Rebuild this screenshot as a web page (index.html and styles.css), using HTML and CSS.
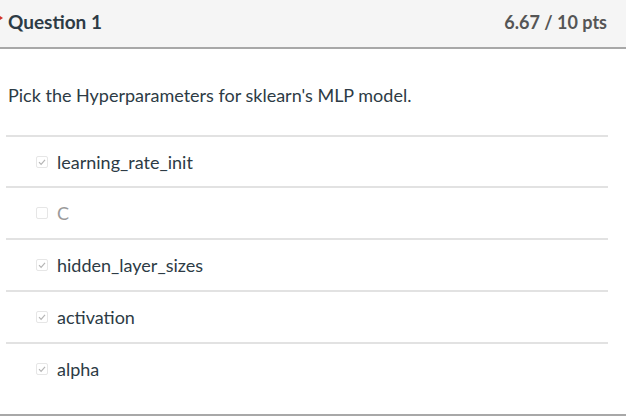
FILE: index.html
```html
<!DOCTYPE html>
<html>
<head>
<meta charset="utf-8">
<link rel="stylesheet" href="styles.css">
</head>
<body>
<div class="question">
  <div class="header">
    <span class="flag"></span>
    <h2 class="title">Question 1</h2>
    <span class="score">6.67 / 10 pts</span>
  </div>
  <div class="body">
    <p class="prompt">Pick the Hyperparameters for sklearn's MLP model.</p>
    <ul class="answers">
      <li class="answer"><span class="box checked"><svg viewBox="0 0 12 12" width="12" height="12"><path d="M3 6.2 L5.1 8.3 L9 3.8" fill="none" stroke="#b5b5b5" stroke-width="1.2"/></svg></span><span class="label">learning_rate_init</span></li>
      <li class="answer"><span class="box"></span><span class="label muted">C</span></li>
      <li class="answer"><span class="box checked"><svg viewBox="0 0 12 12" width="12" height="12"><path d="M3 6.2 L5.1 8.3 L9 3.8" fill="none" stroke="#b5b5b5" stroke-width="1.2"/></svg></span><span class="label">hidden_layer_sizes</span></li>
      <li class="answer"><span class="box checked"><svg viewBox="0 0 12 12" width="12" height="12"><path d="M3 6.2 L5.1 8.3 L9 3.8" fill="none" stroke="#b5b5b5" stroke-width="1.2"/></svg></span><span class="label">activation</span></li>
      <li class="answer"><span class="box checked"><svg viewBox="0 0 12 12" width="12" height="12"><path d="M3 6.2 L5.1 8.3 L9 3.8" fill="none" stroke="#b5b5b5" stroke-width="1.2"/></svg></span><span class="label">alpha</span></li>
    </ul>
  </div>
</div>
</body>
</html>
```
FILE: styles.css
```css
html, body {
  margin: 0;
  padding: 0;
  background: #fff;
}
body {
  font-family: Lato, "Liberation Sans", sans-serif;
  color: #2d3b45;
  width: 626px;
  height: 416px;
  overflow: hidden;
}
.question {
  border-bottom: 3px solid #a8a8a8;
}
.header {
  position: relative;
  height: 43px;
  background: #f5f5f5;
  border-bottom: 2px solid #a8a8a8;
  display: flex;
  align-items: center;
  justify-content: space-between;
  padding: 0 19px 4px 8px;
}
.flag {
  position: absolute;
  left: 0;
  top: 16px;
  width: 0;
  height: 0;
  border-top: 2px solid transparent;
  border-bottom: 2px solid transparent;
  border-left: 3px solid #d0312d;
}
.title {
  margin: 0;
  font-size: 19px;
  font-weight: 700;
  color: #2d3b45;
}
.score {
  font-size: 18px;
  font-weight: 700;
  color: #555;
}
.body {
  padding: 0 18px 0 6px;
}
.prompt {
  margin: 0;
  padding: 35px 0 0 2px;
  height: 51px;
  font-size: 18px;
  line-height: 22px;
}
.answers {
  list-style: none;
  margin: 0;
  padding: 0 0 20px 0;
}
.answer {
  height: 50px;
  border-top: 2px solid #e2e2e2;
  display: flex;
  align-items: center;
  padding-left: 30px;
}
.answer:first-child {
  height: 49px;
}
.box {
  width: 10px;
  height: 10px;
  border: 1px solid #e6e6e6;
  border-radius: 2px;
  margin-right: 9px;
  display: flex;
  align-items: center;
  justify-content: center;
  box-sizing: content-box;
}
.box svg {
  display: block;
  flex: none;
}
.label {
  font-size: 18px;
  color: #2d3b45;
}
.label.muted {
  color: #9a9a9a;
}
```
